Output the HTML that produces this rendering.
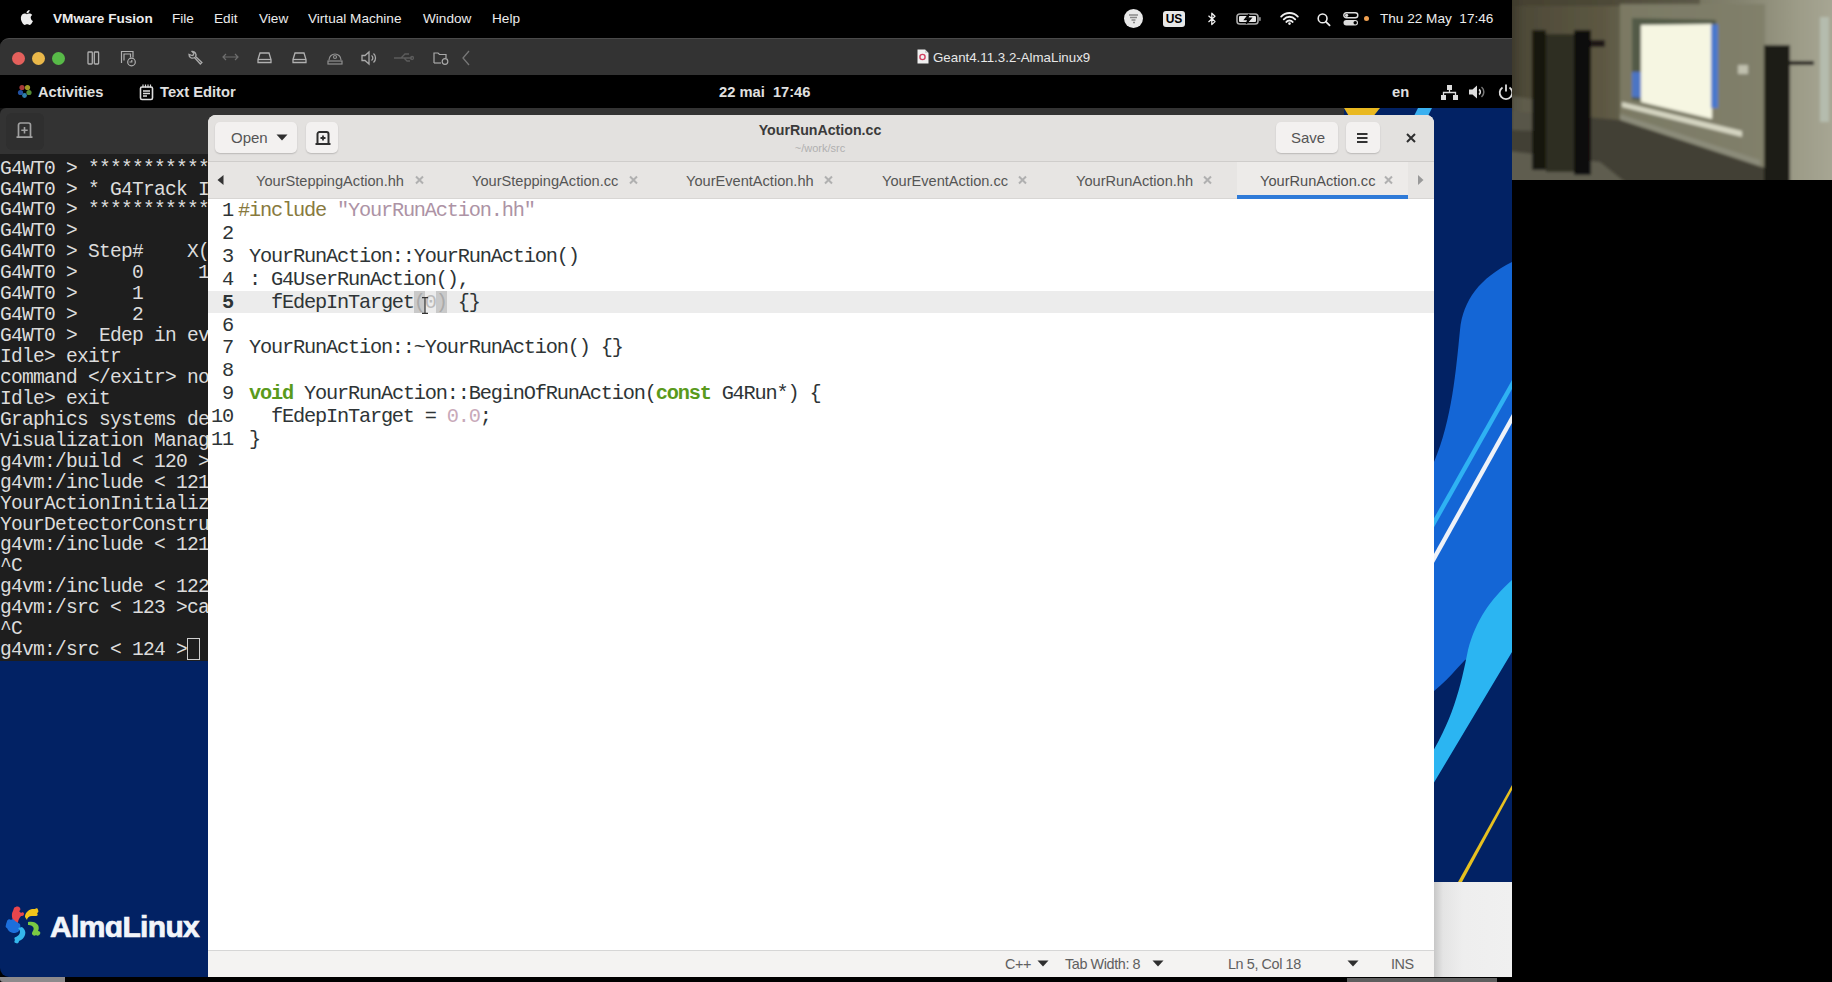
<!DOCTYPE html>
<html><head><meta charset="utf-8">
<style>
*{margin:0;padding:0;box-sizing:border-box}
html,body{width:1832px;height:982px;overflow:hidden;background:#000;font-family:"Liberation Sans",sans-serif}
.a{position:absolute}
.nw{white-space:nowrap}
svg{position:absolute;overflow:visible}
#mac{left:0;top:0;width:1512px;height:38px;background:#000;color:#ececec;font-size:13.6px}
#mac span{position:absolute;top:11px;white-space:nowrap}
#vmw{left:0;top:38px;width:1512px;height:37px;background:#333333;border-radius:9px 0 0 0;border-top:1px solid #4a4a4a}
#gtop{left:0;top:75px;width:1512px;height:33px;background:#000;color:#e0e0e0;font-size:14.7px;font-weight:bold}
#gtop span{position:absolute;top:9px;white-space:nowrap}
#desk{left:0;top:108px;width:1512px;height:869px;background:#022264;overflow:hidden;border-radius:0 0 0 9px}
.mono{font-family:"Liberation Mono",monospace}
#termtxt{left:0;top:158.6px;font-size:19.6px;letter-spacing:-0.76px;line-height:20.94px;color:#dcdcdc;white-space:pre}
#ed{left:208px;top:115px;width:1226px;height:862px;background:#fff;border-radius:8px 8px 0 0;overflow:hidden}
.tab{position:absolute;top:11px;font-size:14.6px;color:#555;white-space:nowrap}
.btn{position:absolute;background:#f3f1f0;border-radius:5px;box-shadow:0 1px 1.5px rgba(0,0,0,.18)}
#code{font-size:20.3px;letter-spacing:-1.18px;line-height:22.9px;color:#2e3436;white-space:pre}
#status span{position:absolute;top:5px;white-space:nowrap;font-size:14.4px;letter-spacing:-0.4px;color:#606060}
</style></head><body>

<!-- ============ mac menu bar ============ -->
<div id="mac" class="a">
  <svg style="left:20px;top:8.5px" width="13" height="16.5" viewBox="0 0 15 18"><path d="M12.3 9.6c0-2.1 1.7-3.1 1.8-3.2-1-1.4-2.5-1.6-3-1.7-1.3-.1-2.5.8-3.1.8-.7 0-1.7-.8-2.8-.7C3.8 4.8 2.4 5.7 1.7 7c-1.5 2.6-.4 6.5 1.1 8.6.7 1 1.6 2.2 2.7 2.2 1.1 0 1.5-.7 2.8-.7s1.7.7 2.8.7c1.2 0 1.9-1.1 2.6-2.100.8-1.200 1.200-2.300 1.200-2.400-.1 0-2.600-1-2.600-3.900zM10.200 3.300c.6-.7 1-1.700.9-2.700-.9 0-1.900.6-2.600 1.300-.6.600-1.100 1.600-.9 2.600 1 .1 2-.5 2.600-1.200z" fill="#eee"/></svg>
  <span style="left:53px;font-weight:bold">VMware Fusion</span>
  <span style="left:172px">File</span>
  <span style="left:214px">Edit</span>
  <span style="left:259px">View</span>
  <span style="left:308px">Virtual Machine</span>
  <span style="left:423px">Window</span>
  <span style="left:492px">Help</span>
  <!-- status icons -->
  <div class="a" style="left:1124px;top:9px;width:19px;height:19px;border-radius:50%;background:#e8e8e8"></div>
  <svg style="left:1127px;top:12px" width="13" height="13" viewBox="0 0 13 13"><path d="M2 3h9M3 5.5h7M4.5 8h4M6 10.5h2" stroke="#888" stroke-width="1.5"/></svg>
  <div class="a" style="left:1163px;top:11px;width:22px;height:16px;border-radius:3px;background:#e8e8e8;color:#000;font-size:12px;font-weight:bold;text-align:center;line-height:16px">US</div>
  <svg style="left:1207px;top:12px" width="10" height="14" viewBox="0 0 10 14"><path d="M1.5 3.8L8 9.6 4.8 12.6V1.2L8 4.2 1.5 10" fill="none" stroke="#eee" stroke-width="1.3" stroke-linejoin="round"/></svg>
  <svg style="left:1236px;top:13px" width="26" height="12" viewBox="0 0 26 12"><rect x="1" y="1" width="21" height="10" rx="2.8" fill="none" stroke="#aaa" stroke-width="1.6"/><rect x="3" y="3" width="17" height="6" rx="1" fill="#e6e6e6"/><rect x="23" y="4" width="1.8" height="4" rx=".8" fill="#888"/><path d="M13 1.2L8.6 6.6h3.4L10.2 10.8l5-5.6h-3.4z" fill="#222" stroke="#000" stroke-width="1.2"/></svg>
  <svg style="left:1280px;top:12px" width="19" height="13" viewBox="0 0 19 13"><path d="M1.2 4.6a11.5 11.5 0 0 1 16.6 0M3.8 7.3a7.8 7.8 0 0 1 11.4 0M6.4 9.9a4 4 0 0 1 6.2 0" fill="none" stroke="#eee" stroke-width="1.9" stroke-linecap="round"/><circle cx="9.5" cy="11.6" r="1.3" fill="#eee"/></svg>
  <svg style="left:1317px;top:13px" width="14" height="13" viewBox="0 0 14 13"><circle cx="5.6" cy="5.4" r="4.4" fill="none" stroke="#eee" stroke-width="1.6"/><path d="M8.8 8.6l3.8 3.8" stroke="#eee" stroke-width="1.8" stroke-linecap="round"/></svg>
  <svg style="left:1343px;top:12px" width="16" height="14" viewBox="0 0 16 14"><rect x="0.8" y="0.8" width="14" height="5" rx="2.5" fill="none" stroke="#ddd" stroke-width="1.4"/><circle cx="3.6" cy="3.3" r="1.6" fill="#ddd"/><rect x="0.5" y="8" width="14.5" height="5.5" rx="2.75" fill="#ddd"/><circle cx="12.2" cy="10.75" r="1.7" fill="#000"/></svg>
  <div class="a" style="left:1363.5px;top:16px;width:5px;height:5px;border-radius:50%;background:#f0a050"></div>
  <span style="left:1380px">Thu 22 May&nbsp; 17:46</span>
</div>

<!-- ============ vmware toolbar ============ -->
<div id="vmw" class="a">
  <div class="a" style="left:12px;top:12.5px;width:13px;height:13px;border-radius:50%;background:#e4605c"></div>
  <div class="a" style="left:32px;top:12.5px;width:13px;height:13px;border-radius:50%;background:#eab84a"></div>
  <div class="a" style="left:52px;top:12.5px;width:13px;height:13px;border-radius:50%;background:#58ba48"></div>
  <svg style="left:87px;top:12px" width="13" height="14" viewBox="0 0 13 14" fill="none" stroke="#b0b0b0" stroke-width="1.3"><rect x="1" y="1" width="4.3" height="12" rx=".8"/><rect x="7.3" y="1" width="4.3" height="12" rx=".8"/></svg>
  <svg style="left:120px;top:11px" width="17" height="17" viewBox="0 0 17 17" fill="none" stroke="#b0b0b0" stroke-width="1.2"><path d="M1.5 13V1.5h11.5v6"/><path d="M4 10.5V4h6.5v3.5"/><circle cx="11.5" cy="12" r="3.8" fill="#333"/><path d="M9.5 12h2.3V10"/></svg>
  <svg style="left:187px;top:11px" width="16" height="16" viewBox="0 0 16 16" fill="none" stroke="#aaa" stroke-width="1.3"><path d="M2 4.5a3.5 3.5 0 0 0 5.5 3l5.8 6.5 1.6-1.5-6.3-6a3.5 3.5 0 0 0-3.5-5l1.8 2-1 2-2-.4z"/></svg>
  <svg style="left:222px;top:13px" width="17" height="10" viewBox="0 0 17 10" fill="none" stroke="#6e6e6e" stroke-width="1.2"><path d="M1 5h15M4 2L1 5l3 3M13 2l3 3-3 3"/></svg>
  <svg style="left:257px;top:13px" width="15" height="12" viewBox="0 0 15 12" fill="none" stroke="#b0b0b0" stroke-width="1.3"><path d="M1 7.5L3 1h9l2 6.5v3H1z"/><path d="M1 7.5h13"/></svg>
  <svg style="left:292px;top:13px" width="15" height="12" viewBox="0 0 15 12" fill="none" stroke="#b0b0b0" stroke-width="1.3"><path d="M1 7.5L3 1h9l2 6.5v3H1z"/><path d="M1 7.5h13"/></svg>
  <svg style="left:327px;top:11px" width="16" height="15" viewBox="0 0 16 15" fill="none" stroke="#909090" stroke-width="1.2"><path d="M2 10a6 6 0 1 1 12 0"/><circle cx="8" cy="7" r="1.5"/><rect x="1" y="11" width="14" height="3"/></svg>
  <svg style="left:361px;top:12px" width="16" height="14" viewBox="0 0 16 14" fill="none" stroke="#aaa" stroke-width="1.3"><path d="M1 4.5h3l4-3.5v12l-4-3.5H1z"/><path d="M10.5 4.5a3 3 0 0 1 0 5M12.5 2.5a6 6 0 0 1 0 9"/></svg>
  <svg style="left:393px;top:12px" width="22" height="14" viewBox="0 0 22 14" fill="none" stroke="#5c5c5c" stroke-width="1.3"><path d="M1 7h18M8 7l4-4h4M11 7l3 3h3"/><circle cx="19" cy="7" r="1.5"/></svg>
  <svg style="left:433px;top:12px" width="16" height="14" viewBox="0 0 16 14" fill="none" stroke="#aaa" stroke-width="1.2"><path d="M1 12V2h4l1.5 1.5H13V7"/><path d="M1 12h7"/><circle cx="12" cy="10.5" r="2.8"/></svg>
  <svg style="left:461px;top:11px" width="10" height="16" viewBox="0 0 10 16" fill="none" stroke="#777" stroke-width="1.3"><path d="M8 1L2 8l6 7"/></svg>
  <svg style="left:917px;top:10px" width="12" height="15" viewBox="0 0 12 15"><path d="M0.5 0.5h7.5l3.5 3.5v10.5H0.5z" fill="#f0f0f0"/><path d="M8 0.5V4h3.5" fill="#ccc"/><circle cx="5.5" cy="8" r="2.6" fill="none" stroke="#d04060" stroke-width="1.4"/></svg>
  <span class="a nw" style="left:933px;top:10.5px;color:#e8e8e8;font-size:13.3px">Geant4.11.3.2-AlmaLinux9</span>
</div>

<!-- ============ gnome top bar ============ -->
<div id="gtop" class="a">
  <svg style="left:17px;top:9px" width="15" height="14" viewBox="0 0 15 14" opacity=".8"><circle cx="5" cy="3.5" r="2.6" fill="#d04848"/><circle cx="10.5" cy="3.5" r="2.6" fill="#c8c030"/><circle cx="12" cy="8.5" r="2.6" fill="#6ab040"/><circle cx="3.5" cy="8.5" r="2.6" fill="#2a64c8"/><circle cx="7.5" cy="11.5" r="2.4" fill="#3aa0d8"/></svg>
  <span style="left:38px">Activities</span>
  <svg style="left:139px;top:9px" width="15" height="17" viewBox="0 0 15 17" fill="none" stroke="#ddd" stroke-width="1.6"><rect x="1.5" y="3" width="12" height="12.5" rx="1.5"/><path d="M4 0.5v3M6.5 0.5v3M9 0.5v3M11.5 0.5v3" stroke-width="1.2"/><path d="M4 7h7M4 9.5h7M4 12h4" stroke-width="1.3"/></svg>
  <span style="left:160px">Text Editor</span>
  <span style="left:719px">22 mai&nbsp; 17:46</span>
  <span style="left:1392px">en</span>
  <svg style="left:1441px;top:10px" width="17" height="15" viewBox="0 0 17 15" fill="#ddd"><rect x="6" y="0" width="5" height="5"/><rect x="0" y="10" width="5" height="5"/><rect x="12" y="10" width="5" height="5"/><path d="M8.5 5v2.5M2.5 10V7.5h12V10" stroke="#ddd" stroke-width="1.3" fill="none"/></svg>
  <svg style="left:1469px;top:10px" width="16" height="14" viewBox="0 0 16 14"><path d="M0 4.5h3.5L8 0.5v13L3.5 9.5H0z" fill="#ddd"/><path d="M10 4.5a3 3 0 0 1 0 5" fill="none" stroke="#ddd" stroke-width="1.6"/><path d="M12.5 2a6.5 6.5 0 0 1 0 10" fill="none" stroke="#777" stroke-width="1.5"/></svg>
  <svg style="left:1498px;top:9px" width="16" height="16" viewBox="0 0 16 16" fill="none" stroke="#ddd" stroke-width="1.8"><path d="M4.5 3.5a6.3 6.3 0 1 0 7 0"/><path d="M8 0.5v7"/></svg>
</div>

<!-- ============ desktop ============ -->
<div id="desk" class="a">
  <!-- wallpaper pieces (coords relative to desk: y-108) -->
  <svg style="left:0;top:0" width="1512" height="869" viewBox="0 108 1512 869">
    <path d="M1344 108h36l-8 10h-22z" fill="#e9b820"/>
    <path d="M1418 108h14l-4 8h-14z" fill="#3ab0f0"/>
    <path d="M1512 262C1480 278 1463 300 1460 330C1456 370 1452 420 1434 462L1420 490L1420 700C1440 690 1455 670 1465 660L1512 640z" fill="#1466d6"/>
    <path d="M1512 380L1512 389L1420 552L1420 543z" fill="#2fb2f3"/>
    <path d="M1512 414L1512 423L1420 588L1420 579z" fill="#eef2f8"/>
    <path d="M1512 580C1490 600 1476 620 1468 650C1460 690 1452 725 1420 772L1420 806L1512 652z" fill="#2bb5f2"/>
    <path d="M1512 785L1512 790L1462 882L1458 882z" fill="#e6c020"/>
  </svg>
  <!-- terminal window -->
  <div class="a" style="left:0;top:0;width:1344px;height:46px;background:#333333;border-radius:6px 0 0 0;box-shadow:-3px -3px 0 #111"></div>
  <div class="a" style="left:0;top:46px;width:1344px;height:507px;background:#1e1e1e"></div>
  <div class="a" style="left:6px;top:5px;width:38px;height:37px;background:#2f2f2f;border-radius:6px"></div>
  <svg style="left:16px;top:12px" width="17" height="19" viewBox="0 0 17 19" fill="none" stroke="#a0a0a0" stroke-width="1.7"><path d="M2.5 17V5a2 2 0 0 1 2-2h8a2 2 0 0 1 2 2v12"/><path d="M0.5 17.2h16"/><path d="M8.5 7v6.5M5.3 10.2h6.4" stroke-width="1.6"/></svg>
  <!-- AlmaLinux logo -->
  <svg style="left:5px;top:797px" width="42" height="40" viewBox="0 0 42 40">
    <path d="M9 3c2-2 5-2 6 0 1 1 0 3-1 3l2 2c1-1 3-1 3 1 0 2-2 2-3 2-2 2-3 5-3 7l-4-1C7 14 6 9 8 6z" fill="#e9464c"/>
    <path d="M20 12c0-4 3-7 7-8h3c1-1 3-1 3 1 1 1 0 3-1 3 1 1 1 3-1 3h-4c-3 0-5 2-5 4z" fill="#f2c41a"/>
    <path d="M23 17c4-1 8 0 10 3 1 2 1 4 0 6 2 0 3 2 2 3-1 2-3 2-4 1-1 1-3 1-4-1 0-1 0-2 1-3 1-2 1-4-1-5-1-1-3-1-4-1z" fill="#7ac943"/>
    <path d="M2 16c1-2 3-2 4-1 1-1 3-1 4 1l5 3c1 3 0 6-2 8l-3 1C6 28 3 26 2 23c-1 0-2-2-1-3 0-2 1-3 1-4z" fill="#1c6fdc"/>
    <path d="M17 22c3 2 4 5 3 8-1 3-3 5-6 6 0 2-2 3-3 2-2 0-2-2-1-3-1-1-1-3 1-3 2-1 4-3 4-5 0-2-1-3-2-4z" fill="#34b7ec"/>
  </svg>
  <span class="a nw" style="left:50px;top:802px;font-size:30px;font-weight:bold;color:#f2f5fa;letter-spacing:-0.65px;-webkit-text-stroke:0.7px #f2f5fa">Alm&#593;Linux</span>
  <!-- right panel behind (gray) -->
  <div class="a" style="left:1433px;top:774px;width:79px;height:95px;background:linear-gradient(90deg,#c4c4c4 0,#e4e4e4 10px,#eeeeee 30px,#f0f0f0 100%)"></div>
</div>

<!-- terminal text -->
<div id="termtxt" class="a mono">G4WT0 > ***********
G4WT0 > * G4Track I
G4WT0 > ***********
G4WT0 >
G4WT0 > Step#    X(
G4WT0 >     0     1
G4WT0 >     1
G4WT0 >     2
G4WT0 >  Edep in ev
Idle> exitr
command &lt;/exitr> no
Idle> exit
Graphics systems de
Visualization Manag
g4vm:/build &lt; 120 >
g4vm:/include &lt; 121
YourActionInitializ
YourDetectorConstru
g4vm:/include &lt; 121
^C
g4vm:/include &lt; 122
g4vm:/src &lt; 123 >ca
^C
g4vm:/src &lt; 124 ></div>
<div class="a" style="left:187px;top:638px;width:13px;height:22px;border:1.5px solid #cfcfcf"></div>

<!-- ============ editor ============ -->
<div id="ed" class="a">
  <!-- header -->
  <div class="a" style="left:0;top:0;width:1226px;height:47px;background:#e3e1df"></div>
  <div class="btn" style="left:7px;top:7px;width:82px;height:31px"></div>
  <span class="a nw" style="left:23px;top:14px;font-size:15px;color:#555">Open</span>
  <svg style="left:68px;top:19px" width="12" height="7" viewBox="0 0 12 7"><path d="M0.5 0.5h11L6 6.5z" fill="#2e2e2e"/></svg>
  <div class="btn" style="left:98px;top:7px;width:32px;height:31px"></div>
  <svg style="left:107px;top:16px" width="16" height="14" viewBox="0 0 16 14" fill="none" stroke="#2e2e2e" stroke-width="2"><path d="M2.5 13V3a2 2 0 0 1 2-2h7a2 2 0 0 1 2 2v10"/><path d="M0.5 13h15"/><path d="M8 4.5v5M5.5 7h5" stroke-width="1.8"/></svg>
  <span class="a nw" style="left:512px;top:7px;width:200px;text-align:center;font-size:14.2px;font-weight:bold;color:#3a3a3a">YourRunAction.cc</span>
  <span class="a nw" style="left:512px;top:27px;width:200px;text-align:center;font-size:11px;color:#b0b0b0">~/work/src</span>
  <div class="btn" style="left:1068px;top:7px;width:62px;height:31px"></div>
  <span class="a nw" style="left:1083px;top:14px;font-size:15px;color:#555">Save</span>
  <div class="btn" style="left:1138px;top:7px;width:34px;height:31px"></div>
  <svg style="left:1149px;top:18px" width="11" height="10" viewBox="0 0 11 10" fill="#333"><rect x="0" y="0" width="10.5" height="2"/><rect x="0" y="4" width="10.5" height="2"/><rect x="0" y="8" width="10.5" height="2"/></svg>
  <svg style="left:1198px;top:18px" width="10" height="10" viewBox="0 0 10 10" stroke="#2e2e2e" stroke-width="2"><path d="M1 1l8 8M9 1l-8 8"/></svg>
  <!-- tabs -->
  <div class="a" style="left:0;top:46px;width:1226px;height:1px;background:#cfcdcb"></div>
  <div class="a" style="left:0;top:47px;width:1226px;height:36px;background:#e7e5e3"></div>
  <div class="a" style="left:1029px;top:47px;width:171px;height:36px;background:#edebe9"></div>
  <div class="a" style="left:0;top:83px;width:1226px;height:1px;background:#d8d6d4"></div>
  <svg style="left:9px;top:60px" width="7" height="10" viewBox="0 0 7 10"><path d="M6.5 0v10L0.5 5z" fill="#333"/></svg>
  <svg style="left:1210px;top:60px" width="6" height="10" viewBox="0 0 6 10"><path d="M0 0v10l5.5-5z" fill="#999"/></svg>
  <span class="tab" style="left:48px;top:57.5px">YourSteppingAction.hh</span>
  <span class="tab" style="left:264px;top:57.5px">YourSteppingAction.cc</span>
  <span class="tab" style="left:478px;top:57.5px">YourEventAction.hh</span>
  <span class="tab" style="left:674px;top:57.5px">YourEventAction.cc</span>
  <span class="tab" style="left:868px;top:57.5px">YourRunAction.hh</span>
  <span class="tab" style="left:1052px;top:57.5px;color:#505050">YourRunAction.cc</span>
  <svg style="left:0;top:0" width="1226" height="100" viewBox="0 0 1226 100" stroke="#b0b0b0" stroke-width="2">
    <path d="M208 61.5l7 7M215 61.5l-7 7"/>
    <path d="M422 61.5l7 7M429 61.5l-7 7"/>
    <path d="M617 61.5l7 7M624 61.5l-7 7"/>
    <path d="M811 61.5l7 7M818 61.5l-7 7"/>
    <path d="M996 61.5l7 7M1003 61.5l-7 7"/>
    <path d="M1177 61.5l7 7M1184 61.5l-7 7"/>
  </svg>
  <div class="a" style="left:1029px;top:80px;width:171px;height:4px;background:#2f7bd8"></div>
  <!-- current line -->
  <div class="a" style="left:0;top:175.5px;width:1226px;height:22px;background:#ececec"></div>
  <!-- status -->
  <div class="a" style="left:0;top:835px;width:1226px;height:1px;background:#d6d6d6"></div>
  <div id="status" class="a" style="left:0;top:836px;width:1226px;height:26px;background:#f4f3f2">
    <span style="left:797px">C++</span>
    <svg style="left:829px;top:9px" width="12" height="7" viewBox="0 0 12 7"><path d="M0.5 0.5h11L6 6.5z" fill="#2e2e2e"/></svg>
    <span style="left:857px">Tab Width: 8</span>
    <svg style="left:944px;top:9px" width="12" height="7" viewBox="0 0 12 7"><path d="M0.5 0.5h11L6 6.5z" fill="#2e2e2e"/></svg>
    <span style="left:1020px">Ln 5, Col 18</span>
    <svg style="left:1139px;top:9px" width="12" height="7" viewBox="0 0 12 7"><path d="M0.5 0.5h11L6 6.5z" fill="#2e2e2e"/></svg>
    <span style="left:1183px">INS</span>
  </div>
</div>

<!-- code -->
<div class="a mono" id="code" style="left:205px;top:200px;width:28px;text-align:right">1
2
3
4
<b>5</b>
6
7
8
9
10
11</div>
<div class="a" style="left:414px;top:290.5px;width:11px;height:22px;background:#c9c9c9"></div>
<div class="a" style="left:436px;top:290.5px;width:11px;height:22px;background:#c9c9c9"></div>
<div class="a mono" id="code" style="left:238px;top:200px"><span style="color:#887a3e">#include</span> <span style="color:#ad93a5">"YourRunAction.hh"</span>

 YourRunAction::YourRunAction()
 : G4UserRunAction(),
   fEdepInTarget<span style="color:#aaa">(</span><span style="color:#bbb">0</span><span style="color:#aaa">)</span> {}

 YourRunAction::~YourRunAction() {}

 <b style="color:#5a9a1c">void</b> YourRunAction::BeginOfRunAction(<b style="color:#5a9a1c">const</b> G4Run*) {
   fEdepInTarget = <span style="color:#c8a9b9">0.0</span>;
 }</div>
<svg style="left:421px;top:297px" width="8" height="17" viewBox="0 0 8 17" fill="none" stroke="#333" stroke-width="1.2"><path d="M1 0.6h6M4 0.6v15.8M1 16.4h6"/></svg>

<!-- ============ camera ============ -->
<svg style="left:1512px;top:0;overflow:hidden" width="320" height="180" viewBox="1512 0 320 180">
  <defs><filter id="bl" x="-5%" y="-5%" width="110%" height="110%"><feGaussianBlur stdDeviation="1.6"/></filter>
  <linearGradient id="wall" x1="0" x2="1" y1="0" y2="0"><stop offset="0" stop-color="#2e2a20"/><stop offset=".07" stop-color="#4e4a38"/><stop offset=".3" stop-color="#5c5742"/><stop offset=".42" stop-color="#6a6853"/><stop offset=".7" stop-color="#83826e"/><stop offset=".88" stop-color="#9d9c88"/><stop offset="1" stop-color="#a9a896"/></linearGradient></defs>
  <g filter="url(#bl)">
  <rect x="1500" y="-10" width="340" height="200" fill="url(#wall)"/>
  <rect x="1500" y="-10" width="200" height="16" fill="#3e3a2c" opacity=".5"/>
  <!-- projected area -->
  <path d="M1620 4L1765 4L1765 168L1620 118z" fill="#7f7e68" opacity=".85"/>
  <path d="M1632 18L1716 20L1716 108L1632 100z" fill="#525a46"/>
  <path d="M1632 72L1642 72L1642 98L1632 97z" fill="#4c74c4"/>
  <path d="M1641 25L1712 24L1712 119L1641 102z" fill="#f6f6e2"/>
  <path d="M1711 25L1718 24L1718 108L1711 108z" fill="#4a78cc"/>
  <path d="M1622 102L1742 131L1742 137L1622 107z" fill="#d6d6c2"/>
  <path d="M1620 114L1760 160L1760 166L1620 120z" fill="#8c8c7a"/>
  <path d="M1500 110L1620 120L1765 168L1765 190L1500 190z" fill="#424034"/>
  <path d="M1512 96L1565 104L1565 132L1512 130z" fill="#6e6e5e" opacity=".5"/>
  <path d="M1500 150L1600 162L1635 190L1500 190z" fill="#7a7a6c" opacity=".5"/>
  <rect x="1738" y="65" width="10" height="9" fill="#c0c0ae"/>
  <!-- posts -->
  <rect x="1532" y="30" width="14" height="140" fill="#15140e"/>
  <rect x="1546" y="34" width="28" height="138" fill="#2e2d21"/>
  <rect x="1574" y="30" width="17" height="145" fill="#100f0a"/>
  <rect x="1591" y="40" width="14" height="7" fill="#1a1914"/>
  <rect x="1764" y="45" width="26" height="140" fill="#1d1c15"/>
  <rect x="1790" y="61" width="24" height="4" fill="#1a1914"/>
  <rect x="1820" y="17" width="9" height="105" fill="#b5bcae"/>
  </g>
</svg>
<div class="a" style="left:0;top:977px;width:65px;height:5px;background:#8d8a8c;border-radius:0 0 0 3px"></div>
<div class="a" style="left:1347px;top:978px;width:150px;height:4px;background:#5e5e5e"></div>
</body></html>
